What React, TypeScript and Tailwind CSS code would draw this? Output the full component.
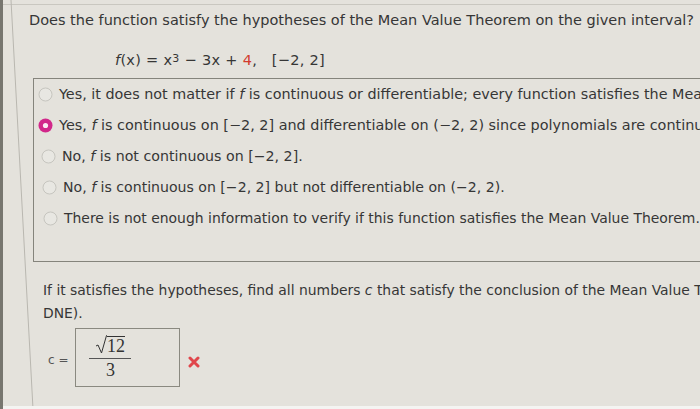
import React from "react";

const Radio = ({ selected }: { selected?: boolean }) =>
  selected ? (
    <svg width="15" height="15" viewBox="0 0 15 15" className="shrink-0">
      <circle cx="7.5" cy="7.5" r="7" fill="#d2278a" />
      <circle cx="7.5" cy="7.5" r="2.6" fill="#fbe9f3" />
    </svg>
  ) : (
    <svg width="15" height="15" viewBox="0 0 15 15" className="shrink-0">
      <circle cx="7.5" cy="7.5" r="6.5" fill="#e8e7e2" stroke="#c6c5bf" strokeWidth="1" />
    </svg>
  );

const F = () => <i>f</i>;

export default function App() {
  const options: { sel?: boolean; cls: string; content: React.ReactNode }[] = [
    { cls: "pl-[0px] text-[14.35px]", content: <>Yes, it does not matter if <F /> is continuous or differentiable; every function satisfies the Mean Value Theorem.</> },
    { sel: true, cls: "pl-0 text-[14.4px]", content: <>Yes, <F /> is continuous on [−2, 2] and differentiable on (−2, 2) since polynomials are continuous and differentiable on ℝ.</> },
    { cls: "pl-[3px] text-[14.2px]", content: <>No, <F /> is not continuous on [−2, 2].</> },
    { cls: "pl-[4px] text-[14.1px]", content: <>No, <F /> is continuous on [−2, 2] but not differentiable on (−2, 2).</> },
    { cls: "pl-[5px] text-[13.95px]", content: <>There is not enough information to verify if this function satisfies the Mean Value Theorem.</> },
  ];
  return (
    <div className="relative w-[700px] h-[409px] overflow-hidden bg-[#e4e2dc] text-[#363636] font-['DejaVu_Sans',sans-serif] border-l-[3px] border-[#77766f]">
      <div className="border-t border-[#c9c7c0] mt-[4px] h-[402px] flex flex-col whitespace-nowrap">
        <div className="pl-[26px] pt-[5px] text-[14.5px] leading-[20px]">
          Does the function satisfy the hypotheses of the Mean Value Theorem on the given interval?
        </div>
        <div className="pl-[112px] pt-[20px] text-[14.5px] leading-[20px] tracking-[0.3px]">
          <i>f</i>(x) = x<sup className="text-[11px] relative -top-[3px]">3</sup> − 3x + <span className="text-[#d33b2f]">4</span>,&nbsp;&nbsp; [−2, 2]
        </div>
        <div className="ml-[30px] mt-[8px] w-[700px] h-[184px] border border-[#85847c] pl-[4px]">
          {options.map((o, i) => (
            <div key={i} className={`flex items-center gap-[6px] h-[31px] ${o.cls}`}>
              <Radio selected={o.sel} />
              <span>{o.content}</span>
            </div>
          ))}
        </div>
        <div className="pl-[40px] pt-[17px] text-[13.9px] leading-[23px]">
          <div>If it satisfies the hypotheses, find all numbers <i>c</i> that satisfy the conclusion of the Mean Value Theorem. (Enter your answers as a comma-separated list. If an answer does not exist, enter</div>
          <div>DNE).</div>
        </div>
        <div className="flex items-center pl-[45px] mt-[3px]">
          <span className="text-[12px] text-[#555] mr-[7px] mt-[4px]">c =</span>
          <div className="w-[105px] h-[59px] border border-[#8a8980] flex items-center pl-[13px]">
            <div className="flex flex-col items-center font-['Liberation_Serif',serif] text-[18px] text-[#333] leading-[20px]">
              <span className="flex items-end px-[1px]">
                <svg width="11" height="19" viewBox="0 0 11 19" className="mb-[1px]">
                  <path d="M0 11 L2 10 L5.5 18 L10.5 0.5 L30 0.5" stroke="#333" strokeWidth="1" fill="none" />
                </svg>
                <span className="border-t border-[#333] leading-[18px]">12</span>
              </span>
              <span className="w-[42px] border-t border-[#555] mt-[3px] text-center leading-[22px]">3</span>
            </div>
          </div>
          <svg width="12" height="12" viewBox="0 0 12 12" className="ml-[8px] mt-[8px]">
            <path d="M2 2 L10 10 M10 2 L2 10" stroke="#e0474c" strokeWidth="3" strokeLinecap="round" />
          </svg>
        </div>
      </div>
      <svg className="absolute inset-0 pointer-events-none" width="700" height="409">
        <line x1="8" y1="0" x2="30" y2="409" stroke="#b9b7b0" strokeWidth="1" />
      </svg>
      <div className="absolute left-0 right-0 bottom-0 h-[3px] bg-[#f4f4f2]" />
    </div>
  );
}
